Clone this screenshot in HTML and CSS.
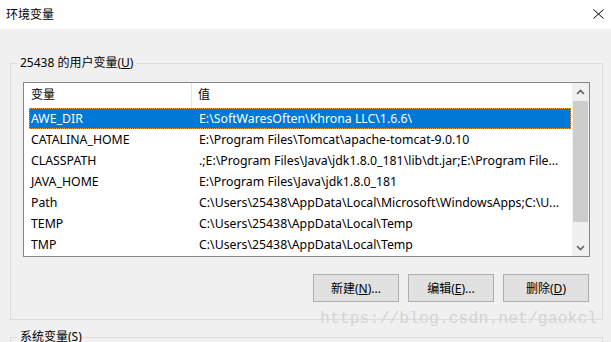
FILE: index.html
```html
<!DOCTYPE html>
<html lang="zh-CN">
<head>
<meta charset="utf-8">
<title>环境变量</title>
<link rel="stylesheet" href="styles.css">
</head>
<body>
<div class="window">
  <div class="titlebar">
    <span class="title">环境变量</span>
    <svg class="close" width="11" height="10" viewBox="0 0 11 10"><path d="M0.5 0.5 L10.5 9.5 M10.5 0.5 L0.5 9.5" stroke="#000" stroke-width="1" fill="none"/></svg>
  </div>
  <div class="body">
    <div class="group user-group">
      <span class="legend">25438 的用户变量(<u>U</u>)</span>
      <div class="listview">
        <div class="list-main">
          <div class="header">
            <div class="hcol c1">变量</div>
            <div class="hcol c2">值</div>
          </div>
          <div class="row selected"><div class="col c1">AWE_DIR</div><div class="col c2">E:\SoftWaresOften\Khrona LLC\1.6.6\</div></div>
          <div class="row"><div class="col c1">CATALINA_HOME</div><div class="col c2">E:\Program Files\Tomcat\apache-tomcat-9.0.10</div></div>
          <div class="row"><div class="col c1">CLASSPATH</div><div class="col c2">.;E:\Program Files\Java\jdk1.8.0_181\lib\dt.jar;E:\Program File...</div></div>
          <div class="row"><div class="col c1">JAVA_HOME</div><div class="col c2">E:\Program Files\Java\jdk1.8.0_181</div></div>
          <div class="row"><div class="col c1">Path</div><div class="col c2">C:\Users\25438\AppData\Local\Microsoft\WindowsApps;C:\U...</div></div>
          <div class="row"><div class="col c1">TEMP</div><div class="col c2">C:\Users\25438\AppData\Local\Temp</div></div>
          <div class="row"><div class="col c1">TMP</div><div class="col c2">C:\Users\25438\AppData\Local\Temp</div></div>
        </div>
        <div class="scrollbar">
          <div class="sb-btn"><svg width="9" height="6" viewBox="0 0 9 6"><path d="M1 5 L4.5 1.5 L8 5" stroke="#606060" stroke-width="1.6" fill="none"/></svg></div>
          <div class="sb-track"><div class="sb-thumb"></div></div>
          <div class="sb-btn"><svg width="9" height="6" viewBox="0 0 9 6"><path d="M1 1 L4.5 4.5 L8 1" stroke="#606060" stroke-width="1.6" fill="none"/></svg></div>
        </div>
      </div>
      <div class="buttons">
        <button class="btn">新建(<u>N</u>)...</button>
        <button class="btn">编辑(<u>E</u>)...</button>
        <button class="btn">删除(<u>D</u>)</button>
      </div>
    </div>
    <div class="group sys-group">
      <span class="legend">系统变量(<u>S</u>)</span>
    </div>
  </div>
  <div class="watermark">https://blog.csdn.net/gaokcl</div>
</div>
</body>
</html>
```
FILE: styles.css
```css
* { box-sizing: border-box; }
html, body { margin: 0; padding: 0; }
body {
  width: 611px;
  height: 342px;
  overflow: hidden;
  background: #f0f0f0;
  font-family: "Noto Sans", "Noto Sans CJK SC", sans-serif;
  font-size: 12px;
  color: #000;
}
.window { position: relative; width: 611px; height: 342px; overflow: hidden; }
.titlebar {
  height: 29px;
  background: #fff;
  display: flex;
  align-items: center;
  justify-content: space-between;
  padding: 0 7px 0 6px;
}
.title { line-height: 16px; }
.close { display: block; margin-top: -2px; }
.body { padding: 34px 8px 0 10px; }
.group {
  position: relative;
  border: 1px solid #dcdcdc;
  width: 593px;
}
.user-group { height: 257px; padding: 18px 12px 0 12px; }
.sys-group { margin-top: 17px; height: 6px; border-bottom: none; }
.legend {
  position: absolute;
  top: -9px;
  left: 6px;
  padding: 0 3px;
  background: #f0f0f0;
  line-height: 16px;
  white-space: nowrap;
}
.listview {
  width: 567px;
  height: 175px;
  border: 1px solid #828790;
  background: #fff;
  display: flex;
}
.list-main { flex: 1; overflow: hidden; }
.header { display: flex; height: 25px; align-items: stretch; }
.hcol { line-height: 24px; white-space: nowrap; }
.hcol.c1 { width: 168px; padding-left: 7px; border-right: 1px solid #e5e5e5; }
.hcol.c2 { padding-left: 6px; }
.row {
  display: flex;
  height: 21px;
  margin: 0 1px 0 5px;
  line-height: 19px;
  font-size: 12.3px;
  border: 1px solid transparent;
  white-space: nowrap;
}
.row.selected {
  background: #0078d7;
  color: #fff;
  border: 1px dotted #f0a040;
}
.col.c1 { width: 164px; padding-left: 1px; }
.col.c2 { padding-left: 5px; overflow: hidden; }
.scrollbar {
  width: 17px;
  display: flex;
  flex-direction: column;
  background: #f0f0f0;
}
.sb-btn {
  height: 17px;
  display: flex;
  align-items: center;
  justify-content: center;
}
.sb-track { flex: 1; padding: 1px 1px 0 1px; }
.sb-thumb { height: 121px; background: #cdcdcd; }
.buttons {
  display: flex;
  justify-content: flex-end;
  gap: 9px;
  margin-top: 17px;
  padding-right: 1px;
}
.btn {
  width: 86px;
  height: 28px;
  border: 1px solid #adadad;
  background: #e1e1e1;
  font-family: inherit;
  font-size: 12px;
  color: #000;
  padding: 0;
}
.watermark {
  position: absolute;
  left: 320px;
  top: 309px;
  font-family: "Liberation Mono", monospace;
  font-size: 16.5px;
  color: #d4d4d4;
  white-space: nowrap;
}
```
